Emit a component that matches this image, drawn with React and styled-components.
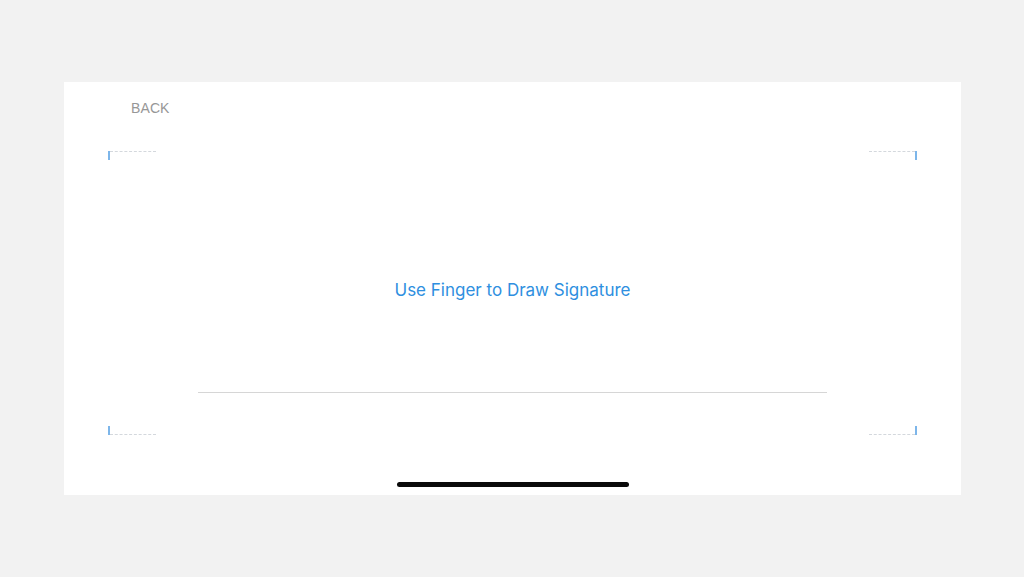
import React from 'react';
import styled, { createGlobalStyle } from 'styled-components';

const GlobalStyle = createGlobalStyle`
  html, body {
    margin: 0;
    padding: 0;
    background: #f2f2f2;
  }
  body {
    font-family: Inter, "Liberation Sans", sans-serif;
  }
`

const Page = styled.div`
  width: 1024px;
  height: 577px;
  display: flex;
  align-items: center;
  justify-content: center;
  padding-left: 1px;
  box-sizing: border-box;
`

const Screen = styled.div`
  width: 897px;
  height: 413px;
  background: #ffffff;
  display: flex;
  flex-direction: column;
`

const Header = styled.div`
  height: 69px;
  padding: 15px 0 0 67px;
  box-sizing: border-box;
`

const BackButton = styled.button`
  border: none;
  background: none;
  padding: 0;
  font-family: "Liberation Sans", Arial, sans-serif;
  font-size: 14px;
  line-height: 16px;
  color: #979797;
  letter-spacing: 0.1px;
  cursor: pointer;
`

const Frame = styled.div`
  margin: 0 44px;
  height: 284px;
  display: flex;
  flex-direction: column;
`

const CornerRow = styled.div`
  display: flex;
  justify-content: space-between;
  height: 9px;
`

const Corner = styled.div`
  width: 48px;
  display: flex;
  flex-direction: ${({ right }) => (right ? 'row-reverse' : 'row')};
  align-items: ${({ bottom }) => (bottom ? 'flex-end' : 'flex-start')};
`

const Tick = styled.div`
  width: 2px;
  height: 9px;
  background: #7db6ea;
`

const Dash = styled.div`
  flex: 1;
  height: 0;
  border-top: 1px dashed #d4d8dd;
`

const Canvas = styled.div`
  flex: 1;
  display: flex;
  flex-direction: column;
  align-items: center;
`

const Prompt = styled.div`
  margin-top: 120px;
  font-size: 17px;
  line-height: 20px;
  color: #2e8fe0;
`

const SignLine = styled.div`
  margin-top: 92px;
  width: 629px;
  height: 1px;
  background: #d6d6d6;
`

const Spacer = styled.div`
  flex: 1;
`

const HomeBar = styled.div`
  align-self: center;
  width: 232px;
  height: 5px;
  border-radius: 3px;
  background: #0a0a0a;
  margin-bottom: 8px;
`

export default function App() {
    return (
        <Page>
            <GlobalStyle />
            <Screen>
                <Header>
                    <BackButton>BACK</BackButton>
                </Header>
                <Frame>
                    <CornerRow>
                        <Corner><Tick /><Dash /></Corner>
                        <Corner right><Tick /><Dash /></Corner>
                    </CornerRow>
                    <Canvas>
                        <Prompt>Use Finger to Draw Signature</Prompt>
                        <SignLine />
                    </Canvas>
                    <CornerRow>
                        <Corner bottom><Tick /><Dash /></Corner>
                        <Corner bottom right><Tick /><Dash /></Corner>
                    </CornerRow>
                </Frame>
                <Spacer />
                <HomeBar />
            </Screen>
        </Page>
    )
}
